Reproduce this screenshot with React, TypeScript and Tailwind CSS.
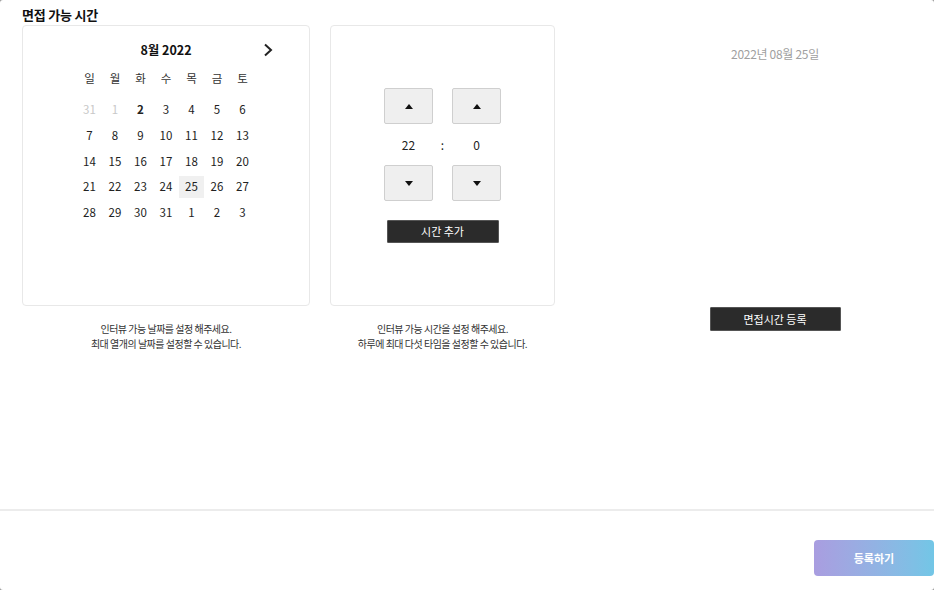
import React from "react";

const font = { fontFamily: '"Noto Sans CJK KR", "Noto Sans", sans-serif' };

const weekdays = ["일", "월", "화", "수", "목", "금", "토"];
const days: { d: number; muted?: boolean; bold?: boolean; sel?: boolean }[] = [
  { d: 31, muted: true }, { d: 1, muted: true }, { d: 2, bold: true }, { d: 3 }, { d: 4 }, { d: 5 }, { d: 6 },
  { d: 7 }, { d: 8 }, { d: 9 }, { d: 10 }, { d: 11 }, { d: 12 }, { d: 13 },
  { d: 14 }, { d: 15 }, { d: 16 }, { d: 17 }, { d: 18 }, { d: 19 }, { d: 20 },
  { d: 21 }, { d: 22 }, { d: 23 }, { d: 24 }, { d: 25, sel: true }, { d: 26 }, { d: 27 },
  { d: 28 }, { d: 29 }, { d: 30 }, { d: 31 }, { d: 1 }, { d: 2 }, { d: 3 },
];

function Arrow({ up }: { up?: boolean }) {
  return (
    <svg width="8" height="5" viewBox="0 0 8 5">
      {up ? <path d="M0 5 L4 0 L8 5 Z" fill="#111" /> : <path d="M0 0 L4 5 L8 0 Z" fill="#111" />}
    </svg>
  );
}

function StepBtn({ up }: { up?: boolean }) {
  return (
    <button className="w-[49px] h-[36px] bg-[#efefef] border border-[#cfcfcf] rounded-[2px] flex items-center justify-center">
      <Arrow up={up} />
    </button>
  );
}

export default function App() {
  return (
    <div className="w-[934px] h-[590px] bg-[#9a9a9a] overflow-hidden" style={font}>
      <div className="w-full h-full bg-white rounded-[3px] flex flex-col">
        <div className="h-[509px] px-[22px]">
          <h1 className="text-[13px] font-bold text-[#111] leading-[18px] pt-[6px] tracking-[-0.2px]">면접 가능 시간</h1>
          <div className="flex mt-[1px]">
            <div className="w-[288px] flex flex-col items-center">
              <div className="w-[288px] h-[281px] border border-[#e8e8e8] rounded-[4px] flex flex-col items-center pt-[15px] relative">
                <div className="h-[18px] text-[12.5px] font-bold text-[#111] leading-[18px]">8월 2022</div>
                <svg className="absolute right-[36px] top-[17px]" width="10" height="14" viewBox="0 0 10 14">
                  <path d="M2 1.5 L8 7 L2 12.5" stroke="#222" strokeWidth="2" fill="none" />
                </svg>
                <div className="grid grid-cols-[repeat(7,25.5px)] mt-[10px] h-[18px] leading-[18px] text-[11.5px] text-[#333]">
                  {weekdays.map((w) => (
                    <div key={w} className="text-center">{w}</div>
                  ))}
                </div>
                <div className="grid grid-cols-[repeat(7,25.5px)] auto-rows-[22px] gap-y-[3.7px] mt-[12px] text-[11.5px]">
                  {days.map((x, i) => (
                    <div
                      key={i}
                      className={
                        "flex items-center justify-center " +
                        (x.muted ? "text-[#c8c8c8] " : "text-[#222] ") +
                        (x.bold ? "font-bold text-[#000] " : "") +
                        (x.sel ? "bg-[#f0f0f0] " : "")
                      }
                    >
                      {x.d}
                    </div>
                  ))}
                </div>
              </div>
              <p className="mt-[15px] text-[10px] leading-[15px] text-[#333] text-center tracking-[-0.5px]">
                인터뷰 가능 날짜를 설정 해주세요.
                <br />
                최대 열개의 날짜를 설정할 수 있습니다.
              </p>
            </div>

            <div className="w-[225px] ml-[20px] flex flex-col items-center">
              <div className="w-[225px] h-[281px] border border-[#e8e8e8] rounded-[4px] flex flex-col items-center pt-[62px]">
                <div className="flex gap-[19px]">
                  <StepBtn up />
                  <StepBtn up />
                </div>
                <div className="h-[41px] flex items-center text-[12px] text-[#222]">
                  <span className="w-[49px] text-center">22</span>
                  <span className="w-[19px] text-center">:</span>
                  <span className="w-[49px] text-center">0</span>
                </div>
                <div className="flex gap-[19px]">
                  <StepBtn />
                  <StepBtn />
                </div>
                <button className="mt-[19px] w-[112px] h-[23px] bg-[#2b2b2b] text-white text-[11px] rounded-[1px] border border-[#555]">
                  시간 추가
                </button>
              </div>
              <p className="mt-[15px] text-[10px] leading-[15px] text-[#333] text-center tracking-[-0.5px]">
                인터뷰 가능 시간을 설정 해주세요.
                <br />
                하루에 최대 다섯 타임을 설정할 수 있습니다.
              </p>
            </div>

            <div className="flex-1 pl-[83px] flex flex-col items-center">
              <div className="mt-[20px] text-[12px] text-[#a0a0a0] leading-[18px] tracking-[-0.3px]">2022년 08월 25일</div>
              <button className="mt-[244px] w-[131px] h-[24px] bg-[#2b2b2b] text-white text-[11px] rounded-[1px] border border-[#555]">
                면접시간 등록
              </button>
            </div>
          </div>
        </div>
        <div className="h-[2px] bg-[#ececec]" />
        <div className="flex-1 flex justify-end items-start pt-[29px]">
          <button className="w-[120px] h-[36px] rounded-[4px] bg-gradient-to-r from-[#a99de0] to-[#72c6e6] text-white text-[11px] font-bold">
            등록하기
          </button>
        </div>
      </div>
    </div>
  );
}
